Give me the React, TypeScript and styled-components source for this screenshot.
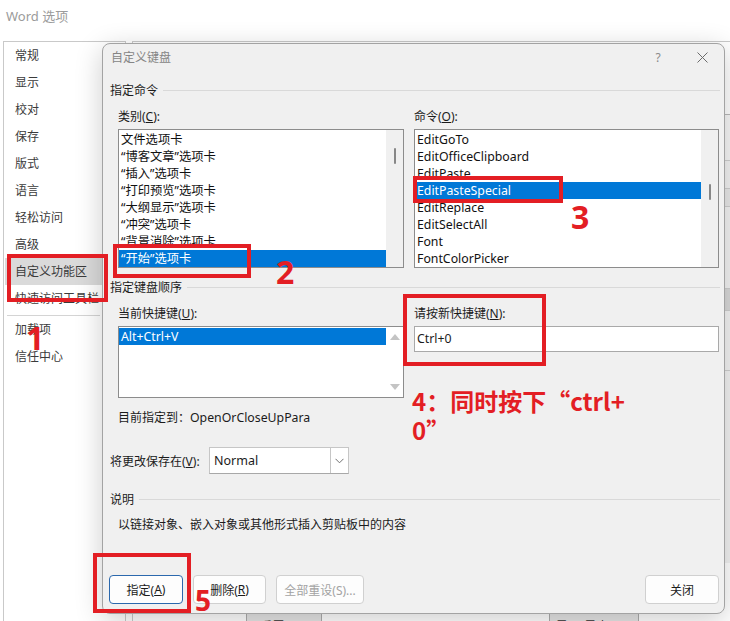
import React from 'react';
import styled, { createGlobalStyle } from 'styled-components';

const UI = `"Noto Sans", "Noto Sans CJK SC", sans-serif`;
const CJK = `"Noto Sans CJK SC", "Noto Sans", sans-serif`;
const RED = '#e31e24';

const Global = createGlobalStyle`
  html, body { margin: 0; padding: 0; background: #fff; }
  * { box-sizing: border-box; }
`;

const Root = styled.div`
  position: relative;
  width: 730px;
  height: 621px;
  overflow: hidden;
  background: #fff;
  font-family: ${UI};
  font-size: 12px;
  color: #1b1b1b;
`;

/* ---------- background Word options window ---------- */
const WindowTitle = styled.div`
  height: 41px;
  padding: 7px 0 0 6px;
  font-size: 13px;
  line-height: 18px;
  color: #9b9b9b;
`;

const Body = styled.div`
  display: flex;
  height: 580px;
`;

const Nav = styled.div`
  width: 123px;
  margin-left: 3px;
  border: 1px solid #c9c9c9;
  border-bottom: none;
  display: flex;
  flex-direction: column;
`;

const NavItem = styled.div<{ $sel?: boolean }>`
  height: 27px;
  line-height: 27px;
  margin: 0 1px;
  padding-left: 10px;
  color: #3b3b3b;
  white-space: nowrap;
  background: ${(p) => (p.$sel ? '#dadada' : 'transparent')};
`;

const NavSep = styled.div`
  height: 1px;
  background: #d4d4d4;
  margin: 3px 25px 0 3px;
`;

const MainPane = styled.div`
  flex: 1;
  margin-left: 6px;
  border-left: 1px solid #c9c9c9;
  border-top: 1px solid #c9c9c9;
  display: flex;
  flex-direction: column;
`;

const PaneTop = styled.div`
  flex: 1;
  display: flex;
  justify-content: flex-end;
`;

const TreeStrip = styled.div`
  width: 6px;
  margin-top: 72px;
  margin-bottom: 50px;
  border-top: 1px solid #b9b9b9;
  background: #f2f2f2;
  display: flex;
  flex-direction: column;
`;

const TreeRow = styled.div<{ $h: number; $bg: string }>`
  height: ${(p) => p.$h}px;
  background: ${(p) => p.$bg};
  border-bottom: 1px solid #cfcfcf;
`;

const BgButtonRow = styled.div`
  display: flex;
  height: 26px;
  margin-bottom: -18px;
  padding-left: 113px;
  gap: 227px;
`;

const BgButton = styled.div<{ $w: number }>`
  width: ${(p) => p.$w}px;
  border: 1px solid #adadad;
  background: #e5e5e5;
  line-height: 26px;
  text-align: center;
  color: #333;
`;

/* ---------- dialog ---------- */
const Dialog = styled.div`
  position: absolute;
  left: 102px;
  top: 43px;
  width: 623px;
  height: 571px;
  background: #f0f0f0;
  border: 1px solid #a3a3a3;
  border-radius: 8px;
  box-shadow: 0 6px 28px rgba(0, 0, 0, 0.2);
  display: flex;
  flex-direction: column;
`;

const TitleBar = styled.div`
  height: 26px;
  display: flex;
  align-items: center;
  padding-left: 8px;
  color: #858585;
`;

const TitleButtons = styled.div`
  margin-left: auto;
  display: flex;
  height: 100%;
`;

const TitleBtn = styled.div`
  width: 44px;
  display: flex;
  align-items: center;
  justify-content: center;
  color: #8a8a8a;
  font-size: 12px;
`;

const Content = styled.div`
  flex: 1;
  display: flex;
  flex-direction: column;
  padding: 0 4px 0 7px;
`;

const GroupHeader = styled.div<{ $mt: number }>`
  display: flex;
  align-items: center;
  gap: 5px;
  line-height: 17px;
  margin-top: ${(p) => p.$mt}px;
  &::after {
    content: '';
    flex: 1;
    height: 1px;
    background: #d9d9d9;
  }
`;

const TwoCol = styled.div`
  display: grid;
  grid-template-columns: 286px 305px;
  column-gap: 10px;
  align-items: start;
  margin-top: 9px;
  padding-left: 8px;
`;

const Field = styled.div`
  display: flex;
  flex-direction: column;
`;

const Label = styled.div`
  line-height: 17px;
  margin-bottom: 4px;
  white-space: nowrap;
`;

const ListBox = styled.div<{ $h: number }>`
  height: ${(p) => p.$h}px;
  border: 1px solid #8c8c8c;
  background: #fff;
  display: flex;
`;

const ListItems = styled.div`
  flex: 1;
  overflow: hidden;
  padding-top: 1px;
`;

const ListRow = styled.div<{ $sel?: boolean }>`
  height: 17px;
  line-height: 17px;
  padding-left: 2px;
  white-space: nowrap;
  font-size: 12.3px;
  background: ${(p) => (p.$sel ? '#0078d7' : 'transparent')};
  color: ${(p) => (p.$sel ? '#fff' : '#111')};
`;

const ScrollTrack = styled.div<{ $thumb: number }>`
  width: 17px;
  background: #f0f0f0;
  padding-top: ${(p) => p.$thumb}px;
  display: flex;
  flex-direction: column;
  align-items: center;
`;

const Thumb = styled.div`
  width: 2px;
  height: 16px;
  background: #878787;
  border-radius: 1px;
`;

const ArrowTrack = styled.div`
  width: 17px;
  display: flex;
  flex-direction: column;
  align-items: center;
  justify-content: space-between;
  padding: 7px 0 7px;
`;

const Arrow = styled.div<{ $down?: boolean }>`
  width: 0;
  height: 0;
  border-left: 5px solid transparent;
  border-right: 5px solid transparent;
  ${(p) =>
    p.$down ? 'border-top: 6px solid #c4c4c4;' : 'border-bottom: 6px solid #c4c4c4;'}
`;

const TextInput = styled.div`
  height: 26px;
  border: 1px solid #a9a9a9;
  background: #fff;
  padding-left: 2px;
  line-height: 24px;
  font-size: 12.3px;
`;

const InfoLine = styled.div`
  margin-top: 11px;
  padding-left: 8px;
  line-height: 17px;
`;

const Mono = styled.span`
  font-size: 12.3px;
`;

const SaveRow = styled.div`
  display: flex;
  align-items: center;
  margin-top: 21px;
  height: 27px;
`;

const SaveLabel = styled.div`
  width: 99px;
  white-space: nowrap;
`;

const Select = styled.div`
  width: 140px;
  height: 27px;
  border: 1px solid #c6c6c6;
  border-bottom-color: #a8a8a8;
  background: #fff;
  display: flex;
`;

const SelectValue = styled.div`
  flex: 1;
  padding-left: 4px;
  line-height: 25px;
  font-size: 12.5px;
`;

const SelectBtn = styled.div`
  width: 18px;
  border-left: 1px solid #c6c6c6;
  display: flex;
  align-items: center;
  justify-content: center;
`;

const Desc = styled.div`
  margin-top: 8px;
  padding-left: 8px;
  line-height: 17px;
`;

const ButtonRow = styled.div`
  margin: auto 1px 9px -1px;
  display: flex;
  gap: 10px;
`;

const Btn = styled.div<{ $w: number; $primary?: boolean; $disabled?: boolean; $push?: boolean }>`
  width: ${(p) => p.$w}px;
  height: 29px;
  border-radius: 4px;
  background: #fdfdfd;
  border: 1px solid ${(p) => (p.$primary ? '#2b68ad' : '#d0d0d0')};
  color: ${(p) => (p.$disabled ? '#a3a3a3' : '#1b1b1b')};
  display: flex;
  align-items: center;
  justify-content: center;
  margin-left: ${(p) => (p.$push ? 'auto' : '0')};
`;

/* ---------- annotations (overlay) ---------- */
const RedBox = styled.div<{ $x: number; $y: number; $w: number; $h: number }>`
  position: absolute;
  left: ${(p) => p.$x}px;
  top: ${(p) => p.$y}px;
  width: ${(p) => p.$w}px;
  height: ${(p) => p.$h}px;
  border: 4px solid ${RED};
  pointer-events: none;
`;

const RedNum = styled.div<{ $x: number; $y: number; $s: number }>`
  position: absolute;
  left: ${(p) => p.$x}px;
  top: ${(p) => p.$y}px;
  font-family: "Noto Sans", sans-serif;
  font-weight: 700;
  font-size: ${(p) => p.$s}px;
  line-height: 1;
  color: ${RED};
`;

const RedNote = styled.div`
  position: absolute;
  left: 412px;
  top: 386px;
  font-family: ${CJK};
  font-weight: 700;
  font-size: 24px;
  line-height: 29px;
  color: ${RED};
  white-space: nowrap;
`;

const navItems = ['常规', '显示', '校对', '保存', '版式', '语言', '轻松访问', '高级', '自定义功能区', '快速访问工具栏'];

const categories = [
  '文件选项卡',
  '“博客文章”选项卡',
  '“插入”选项卡',
  '“打印预览”选项卡',
  '“大纲显示”选项卡',
  '“冲突”选项卡',
  '“背景消除”选项卡',
  '“开始”选项卡',
];

const commands = [
  'EditGoTo',
  'EditOfficeClipboard',
  'EditPaste',
  'EditPasteSpecial',
  'EditReplace',
  'EditSelectAll',
  'Font',
  'FontColorPicker',
];

const treeRows: Array<[number, string]> = [
  [46, '#f7f7f7'],
  [28, '#f2f2f2'],
  [18, '#e9e9e9'],
  [82, '#f4f4f4'],
  [22, '#d9d9d9'],
  [60, '#f4f4f4'],
];

export default function App() {
  return (
    <Root>
      <Global />
      <WindowTitle>Word 选项</WindowTitle>
      <Body>
        <Nav>
          {navItems.map((n) => (
            <NavItem key={n} $sel={n === '自定义功能区'}>
              {n}
            </NavItem>
          ))}
          <NavSep />
          <NavItem>加载项</NavItem>
          <NavItem>信任中心</NavItem>
        </Nav>
        <MainPane>
          <PaneTop>
            <TreeStrip>
              {treeRows.map(([h, bg], i) => (
                <TreeRow key={i} $h={h} $bg={bg} />
              ))}
            </TreeStrip>
          </PaneTop>
          <BgButtonRow>
            <BgButton $w={76}>重置(E) ▾</BgButton>
            <BgButton $w={90}>导入/导出(P) ▾</BgButton>
          </BgButtonRow>
        </MainPane>
      </Body>

      <Dialog>
        <TitleBar>
          自定义键盘
          <TitleButtons>
            <TitleBtn>?</TitleBtn>
            <TitleBtn>
              <svg width="11" height="11" viewBox="0 0 11 11">
                <path d="M0.5 0.5 L10.5 10.5 M10.5 0.5 L0.5 10.5" stroke="#6b6b6b" strokeWidth="1" fill="none" />
              </svg>
            </TitleBtn>
          </TitleButtons>
        </TitleBar>
        <Content>
          <GroupHeader $mt={12}>指定命令</GroupHeader>
          <TwoCol>
            <Field>
              <Label>
                类别(<u>C</u>):
              </Label>
              <ListBox $h={139}>
                <ListItems>
                  {categories.map((c, i) => (
                    <ListRow key={c} $sel={i === categories.length - 1}>
                      {c}
                    </ListRow>
                  ))}
                </ListItems>
                <ScrollTrack $thumb={18}>
                  <Thumb />
                </ScrollTrack>
              </ListBox>
            </Field>
            <Field>
              <Label>
                命令(<u>O</u>):
              </Label>
              <ListBox $h={139}>
                <ListItems>
                  {commands.map((c) => (
                    <ListRow key={c} $sel={c === 'EditPasteSpecial'}>
                      {c}
                    </ListRow>
                  ))}
                </ListItems>
                <ScrollTrack $thumb={54}>
                  <Thumb />
                </ScrollTrack>
              </ListBox>
            </Field>
          </TwoCol>

          <GroupHeader $mt={11}>指定键盘顺序</GroupHeader>
          <TwoCol>
            <Field>
              <Label>
                当前快捷键(<u>U</u>):
              </Label>
              <ListBox $h={72}>
                <ListItems>
                  <ListRow $sel>Alt+Ctrl+V</ListRow>
                </ListItems>
                <ArrowTrack>
                  <Arrow />
                  <Arrow $down />
                </ArrowTrack>
              </ListBox>
            </Field>
            <Field>
              <Label>
                请按新快捷键(<u>N</u>):
              </Label>
              <TextInput>Ctrl+0</TextInput>
            </Field>
          </TwoCol>

          <InfoLine>
            目前指定到：<Mono>OpenOrCloseUpPara</Mono>
          </InfoLine>

          <SaveRow>
            <SaveLabel>
              将更改保存在(<u>V</u>):
            </SaveLabel>
            <Select>
              <SelectValue>Normal</SelectValue>
              <SelectBtn>
                <svg width="9" height="6" viewBox="0 0 9 6">
                  <path d="M0.5 0.8 L4.5 4.8 L8.5 0.8" stroke="#707070" strokeWidth="1" fill="none" />
                </svg>
              </SelectBtn>
            </Select>
          </SaveRow>

          <GroupHeader $mt={17}>说明</GroupHeader>
          <Desc>以链接对象、嵌入对象或其他形式插入剪贴板中的内容</Desc>

          <ButtonRow>
            <Btn $w={74} $primary>
              指定(<u>A</u>)
            </Btn>
            <Btn $w={73}>
              删除(<u>R</u>)
            </Btn>
            <Btn $w={88} $disabled>
              全部重设(S)...
            </Btn>
            <Btn $w={74} $push>
              关闭
            </Btn>
          </ButtonRow>
        </Content>
      </Dialog>

      <RedBox $x={7} $y={254} $w={101} $h={48} />
      <RedNum $x={26} $y={322} $s={32}>1</RedNum>
      <RedBox $x={113} $y={244} $w={138} $h={34} />
      <RedNum $x={276} $y={256} $s={32}>2</RedNum>
      <RedBox $x={413} $y={176} $w={150} $h={27} />
      <RedNum $x={571} $y={201} $s={32}>3</RedNum>
      <RedBox $x={403} $y={294} $w={143} $h={72} />
      <RedNote>
        4：同时按下“ctrl+
        <br />
        0”
      </RedNote>
      <RedBox $x={93} $y={553} $w={98} $h={60} />
      <RedNum $x={195} $y={586} $s={28}>5</RedNum>
    </Root>
  );
}
